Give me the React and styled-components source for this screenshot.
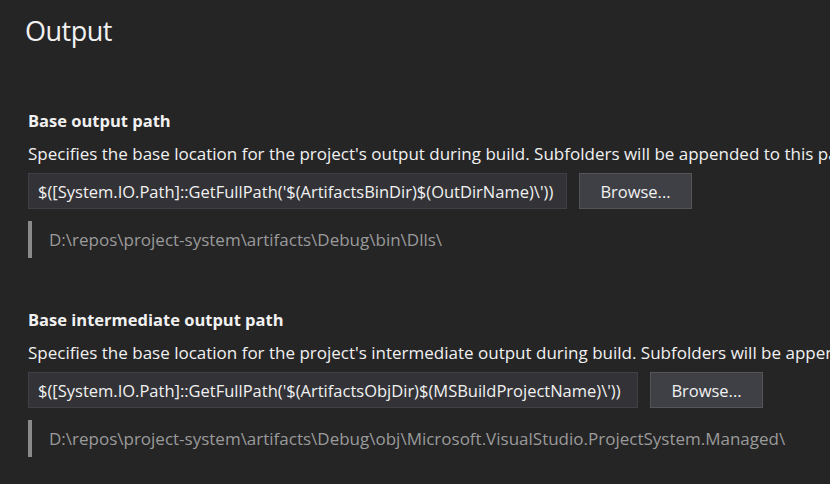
import styled, { createGlobalStyle } from 'styled-components';

const GlobalStyle = createGlobalStyle`
  html, body {
    margin: 0;
    padding: 0;
    background: #252526;
    overflow: hidden;
  }
  body {
    font-family: 'Open Sans', 'Noto Sans', sans-serif;
    color: #f1f1f1;
  }
`;

const settings = [
  {
    id: 'base',
    title: 'Base output path',
    description:
      "Specifies the base location for the project's output during build. Subfolders will be appended to this path to differentiate project configurations.",
    value: "$([System.IO.Path]::GetFullPath('$(ArtifactsBinDir)$(OutDirName)\\'))",
    inputWidth: 539,
    evaluated: 'D:\\repos\\project-system\\artifacts\\Debug\\bin\\Dlls\\',
  },
  {
    id: 'intermediate',
    title: 'Base intermediate output path',
    description:
      "Specifies the base location for the project's intermediate output during build. Subfolders will be appended to this path to differentiate project configurations.",
    value: "$([System.IO.Path]::GetFullPath('$(ArtifactsObjDir)$(MSBuildProjectName)\\'))",
    inputWidth: 610,
    evaluated: 'D:\\repos\\project-system\\artifacts\\Debug\\obj\\Microsoft.VisualStudio.ProjectSystem.Managed\\',
  },
];

const App = () => {
  return (
    <Page>
      <GlobalStyle />
      <PageTitle>Output</PageTitle>
      <SettingList>
        {settings.map((setting) => (
          <Setting key={setting.id}>
            <SettingName>{setting.title}</SettingName>
            <SettingDescription>{setting.description}</SettingDescription>
            <EditorRow>
              <PathInput $width={setting.inputWidth} value={setting.value} readOnly spellCheck={false} />
              <BrowseButton type="button">Browse...</BrowseButton>
            </EditorRow>
            <EvaluatedValue>{setting.evaluated}</EvaluatedValue>
          </Setting>
        ))}
      </SettingList>
    </Page>
  );
};

const Page = styled.div`
  width: 830px;
  height: 484px;
  padding-top: 13px;
  box-sizing: border-box;
  overflow: hidden;
`;

const PageTitle = styled.h1`
  margin: 0 0 0 25px;
  font-size: 27px;
  line-height: 36px;
  font-weight: 400;
  letter-spacing: -0.5px;
  color: #f1f1f1;
`;

const SettingList = styled.div`
  display: flex;
  flex-direction: column;
  gap: 51px;
  margin-top: 61px;
  padding-left: 28px;
`;

const Setting = styled.section`
  display: flex;
  flex-direction: column;
`;

const SettingName = styled.h2`
  margin: 0;
  font-size: 16.5px;
  line-height: 22px;
  font-weight: 700;
  white-space: nowrap;
`;

const SettingDescription = styled.p`
  margin: 11px 0 0;
  font-size: 17px;
  line-height: 22px;
  white-space: nowrap;
`;

const EditorRow = styled.div`
  display: flex;
  align-items: center;
  gap: 12px;
  margin-top: 8px;
`;

const PathInput = styled.input`
  width: ${({ $width }) => $width}px;
  height: 36px;
  box-sizing: border-box;
  padding: 0 9px;
  background: #333337;
  border: 1px solid #3f3f46;
  color: #f1f1f1;
  font-family: inherit;
  font-size: 16.5px;
  outline: none;
`;

const BrowseButton = styled.button`
  width: 113px;
  height: 36px;
  box-sizing: border-box;
  background: #3f3f46;
  border: 1px solid #555558;
  color: #f1f1f1;
  font-family: inherit;
  font-size: 16.5px;
`;

const EvaluatedValue = styled.div`
  margin-top: 12px;
  height: 37px;
  padding-left: 17px;
  border-left: 4px solid #8a8a8a;
  display: flex;
  align-items: center;
  color: #9a9a9a;
  font-size: 17px;
  white-space: nowrap;
`;

export default App;
